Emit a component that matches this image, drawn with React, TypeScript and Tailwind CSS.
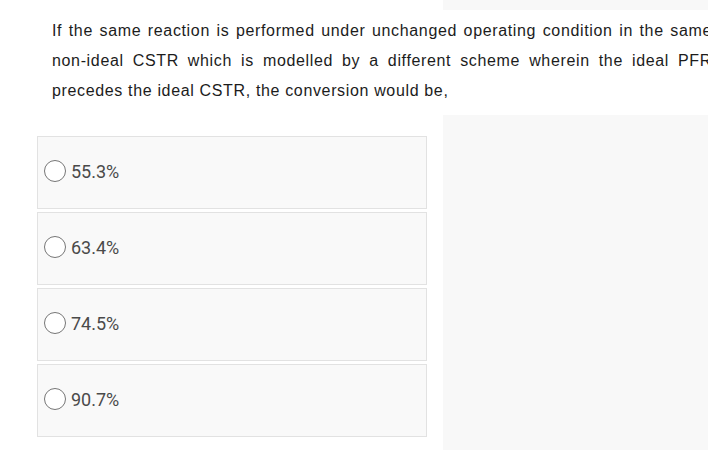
import React from "react";

const options = ["55.3%", "63.4%", "74.5%", "90.7%"];

export default function App() {
  return (
    <div className="w-[708px] h-[450px] overflow-hidden bg-white flex flex-col">
      <div className="flex h-[10px] shrink-0">
        <div className="w-[443px] shrink-0" />
        <div className="flex-1 bg-[#f8f8f8]" />
      </div>
      <p
        className="ml-[52px] mt-[6px] w-[660px] shrink-0 text-[16px] leading-[30px] tracking-[0.65px] text-[#1c1c1c] text-justify"
        style={{ fontFamily: '"Liberation Sans", Arial, sans-serif' }}
      >
        If the same reaction is performed under unchanged operating condition in the same non-ideal CSTR which is
        modelled by a different scheme wherein the ideal PFR precedes the ideal CSTR, the conversion would be,
      </p>
      <div className="flex mt-[9px] flex-1">
        <div className="w-[443px] shrink-0 pt-[21px] pl-[37px] flex flex-col gap-[3px]">
          {options.map((o) => (
            <div
              key={o}
              className="w-[390px] h-[73px] border border-[#e2e2e2] bg-[#f9f9f9] flex items-center pl-[6px] pb-[3px]"
            >
              <span className="w-[22px] h-[22px] rounded-full border border-[#767676] bg-white shrink-0" />
              <span
                className="ml-[5px] text-[18px] text-[#4a4a4a]"
                style={{ fontFamily: 'Roboto, "Noto Sans", sans-serif' }}
              >
                {o}
              </span>
            </div>
          ))}
        </div>
        <div className="flex-1 bg-[#f8f8f8]" />
      </div>
    </div>
  );
}
